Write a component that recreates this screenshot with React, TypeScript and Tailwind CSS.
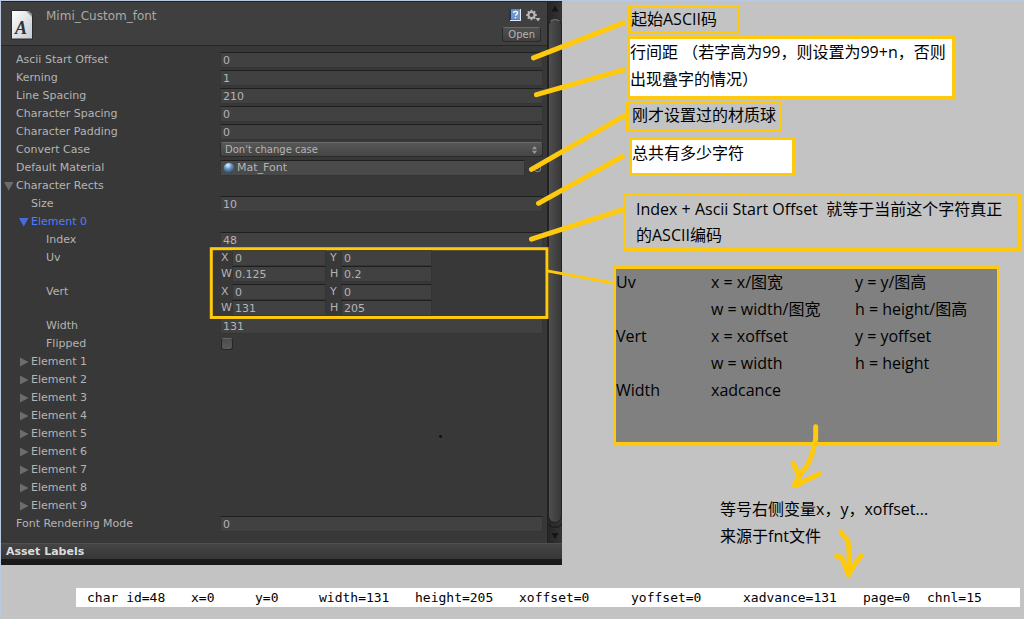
import React, { useState } from 'react';
import clsx from 'clsx';

const fieldStyle =
  'block h-4 w-full min-w-0 border border-[#353535] border-t-[#1f1f1f] bg-[#414141] px-0.5 text-[11px] leading-[14px] text-[#b4b4b4] outline-none';

type RowProps = {
  id?: string;
  label: string;
  indent?: 0 | 1 | 2;
  children?: React.ReactNode;
};

const Row = ({ id, label, indent = 0, children }: RowProps) => (
  <div className="flex min-h-[18px] items-start">
    <label
      htmlFor={id}
      className={clsx(
        'w-[219px] shrink-0 leading-[18px]',
        indent === 0 && 'pl-[15px]',
        indent === 1 && 'pl-[30px]',
        indent === 2 && 'pl-[45px]'
      )}
    >
      {label}
    </label>
    <div className="min-w-0 flex-1 pt-px pr-1">{children}</div>
  </div>
);

type NumberRowProps = { id: string; label: string; value: string; indent?: 0 | 1 | 2 };

const NumberRow = ({ id, label, value, indent = 0 }: NumberRowProps) => (
  <Row id={id} label={label} indent={indent}>
    <input id={id} type="text" defaultValue={value} className={fieldStyle} />
  </Row>
);

type FoldoutProps = { label: string; open?: boolean; active?: boolean; nested?: boolean };

const Foldout = ({ label, open = false, active = false, nested = false }: FoldoutProps) => (
  <button
    type="button"
    aria-expanded={open}
    className={clsx(
      'flex h-[18px] items-center gap-0.5 text-left',
      nested ? 'pl-[17px]' : 'pl-0.5',
      active ? 'text-[#4c7eff]' : 'text-[#b4b4b4]'
    )}
  >
    <svg viewBox="0 0 11 10" className={clsx('h-2.5 w-[11px]', active ? 'text-[#4a6be0]' : 'text-[#6c6c6c]')}>
      <path d={open ? 'M1 1h9.5L5.7 9.5z' : 'M2 0.5v9L10.5 5z'} fill="currentColor" />
    </svg>
    {label}
  </button>
);

const RectField = ({ name, values }: { name: string; values: [string, string, string, string] }) => (
  <fieldset className="flex pb-px">
    <legend className="float-left w-[219px] pl-[45px] leading-[18px]">{name}</legend>
    <div className="grid grid-cols-[106px_103px] gap-x-[3px] pt-px">
      {['X', 'Y', 'W', 'H'].map((axis, i) => (
        <label key={axis} className="flex h-4 items-center">
          <span className="w-3 shrink-0 pl-px leading-4">{axis}</span>
          <input type="text" defaultValue={values[i]} className={fieldStyle} />
        </label>
      ))}
    </div>
  </fieldset>
);

const FontIcon = () => (
  <svg viewBox="0 0 22 30" className="h-[30px] w-[22px]">
    <defs>
      <linearGradient id="paper" x1="0" y1="0" x2="1" y2="1">
        <stop offset="0" stopColor="#ffffff" />
        <stop offset="1" stopColor="#c3cbd2" />
      </linearGradient>
    </defs>
    <path d="M0.5 0.5h17l4 4v24.5h-21z" fill="url(#paper)" stroke="#2b2b2b" />
    <path d="M15 1l6 6V4l-3-3z" fill="#8d979f" />
    <text x="4" y="24" fontFamily="Liberation Serif, serif" fontStyle="italic" fontWeight="bold" fontSize="18" fill="#333">
      A
    </text>
  </svg>
);

const HelpIcon = () => (
  <svg viewBox="0 0 14 14" className="h-3.5 w-3.5">
    <path d="M1 1h12v12H1z" fill="#5a7fb5" />
    <path d="M1 1h2v12H1z" fill="#20365c" />
    <path d="M3 2h9v9H3z" fill="#6f96cc" />
    <path d="M2 12h11v1H2z" fill="#dfe8f4" />
    <path d="M12.5 1v12" stroke="#dfe8f4" />
    <path d="M5.5 5c0-2.2 4-2.2 4 0 0 1.4-2 1.4-2 2.8M7.5 9v1.3" stroke="#fff" strokeWidth="1.3" fill="none" />
  </svg>
);

const GearIcon = () => (
  <svg viewBox="0 0 15 13" className="h-[13px] w-[15px]">
    <g stroke="#b9b9b9" fill="none">
      <circle cx="5.5" cy="6" r="3" strokeWidth="2" />
      <path
        d="M5.5 0.8v2M5.5 9.2v2M0.3 6h2M8.7 6h2M1.8 2.3l1.5 1.5M7.7 8.2l1.5 1.5M9.2 2.3L7.7 3.8M3.3 8.2L1.8 9.7"
        strokeWidth="1.8"
      />
    </g>
    <path d="M9.5 9h5L12 12.5z" fill="#b9b9b9" />
  </svg>
);

const Header = () => (
  <header className="flex h-11 items-start justify-between border-b border-[#262626] bg-[#3f3f3f] pt-1.5 pr-1.5 pl-2.5">
    <div className="flex gap-[13px]">
      <div className="pt-0.5">
        <FontIcon />
      </div>
      <h1 className="text-[12px] leading-4 text-[#a9a9a9]">Mimi_Custom_font</h1>
    </div>
    <div className="flex flex-col items-end gap-[5px]">
      <div className="flex gap-1">
        <button type="button" aria-label="Help">
          <HelpIcon />
        </button>
        <button type="button" aria-label="Settings">
          <GearIcon />
        </button>
      </div>
      <button
        type="button"
        className="h-[15px] rounded-[3px] border border-[#2a2a2a] border-t-[#6a6a6a] bg-linear-to-b from-[#4f4f4f] to-[#404040] px-[5px] text-[10px] leading-[13px]"
      >
        Open
      </button>
    </div>
  </header>
);

const ScrollBar = () => (
  <div className="flex w-[15px] shrink-0 flex-col items-center border-l border-[#222] bg-linear-to-r from-[#262626] to-[#343434]">
    <svg viewBox="0 0 14 17" className="h-[17px] w-3.5 shrink-0">
      <path d="M3.5 9.5h7L7 3.5z" fill="#141414" />
    </svg>
    <div className="w-3.5 flex-1 rounded-full border border-[#222] border-t-[#777] bg-linear-to-r from-[#4f4f4f] to-[#383838]" />
    <svg viewBox="0 0 14 20" className="h-5 w-3.5 shrink-0">
      <path d="M0.5 0.5c1.5 5 11.5 5 13 0" fill="none" stroke="#1f1f1f" strokeWidth="1.5" />
      <path d="M3.5 10h7L7 16z" fill="#141414" />
    </svg>
  </div>
);

const Inspector = () => {
  const [convertCase, setConvertCase] = useState('none');

  return (
    <section className="flex flex-col border-t border-[#222] bg-[#383838] font-['DejaVu_Sans',Verdana,sans-serif] text-[11px] text-[#b4b4b4]">
      <div className="flex">
        <div className="min-w-0 flex-1">
          <Header />
          <div className="flex flex-col pt-[5px] pb-2.5">
            <NumberRow id="ascii" label="Ascii Start Offset" value="0" />
            <NumberRow id="kerning" label="Kerning" value="1" />
            <NumberRow id="line-spacing" label="Line Spacing" value="210" />
            <NumberRow id="char-spacing" label="Character Spacing" value="0" />
            <NumberRow id="char-padding" label="Character Padding" value="0" />
            <Row id="convert-case" label="Convert Case">
              <div className="relative">
                <select
                  id="convert-case"
                  value={convertCase}
                  onChange={(e) => setConvertCase(e.target.value)}
                  className="block h-[15px] w-full appearance-none rounded-[3px] border border-[#2a2a2a] border-t-[#6a6a6a] bg-linear-to-b from-[#575757] to-[#454545] px-1 text-[10px] leading-[13px] outline-none"
                >
                  <option value="none">Don't change case</option>
                  <option value="upper">To upper case</option>
                  <option value="lower">To lower case</option>
                </select>
                <svg viewBox="0 0 5 8" className="pointer-events-none absolute top-1 right-1.5 h-2 w-[5px]">
                  <path d="M0 3.2h5L2.5 0zM0 4.8h5L2.5 8z" fill="#9a9a9a" />
                </svg>
              </div>
            </Row>
            <Row id="material" label="Default Material">
              <div className="flex items-center justify-between">
                <button
                  id="material"
                  type="button"
                  className="flex h-4 flex-1 items-center gap-0.5 border border-[#353535] border-t-[#1f1f1f] bg-[#4a4a4a] px-0.5 text-left leading-[14px]"
                >
                  <svg viewBox="0 0 12 12" className="h-3 w-3">
                    <defs>
                      <radialGradient id="ball" cx="0.4" cy="0.25" r="0.8">
                        <stop offset="0" stopColor="#e8f3fb" />
                        <stop offset="0.45" stopColor="#5f92c0" />
                        <stop offset="1" stopColor="#21405e" />
                      </radialGradient>
                    </defs>
                    <circle cx="6" cy="6" r="5.3" fill="url(#ball)" />
                  </svg>
                  Mat_Font
                </button>
                <button type="button" aria-label="Select material" className="w-[18px] pl-2">
                  <svg viewBox="0 0 9 9" className="h-[9px] w-[9px]">
                    <circle cx="4.5" cy="4.5" r="3.2" fill="none" stroke="#909090" />
                    <circle cx="4.5" cy="4.5" r="1" fill="#909090" />
                  </svg>
                </button>
              </div>
            </Row>
            <Foldout label="Character Rects" open />
            <NumberRow id="size" label="Size" value="10" indent={1} />
            <Foldout label="Element 0" open active nested />
            <NumberRow id="index" label="Index" value="48" indent={2} />
            <RectField name="Uv" values={['0', '0', '0.125', '0.2']} />
            <RectField name="Vert" values={['0', '0', '131', '205']} />
            <NumberRow id="width" label="Width" value="131" indent={2} />
            <Row id="flipped" label="Flipped" indent={2}>
              <input
                id="flipped"
                type="checkbox"
                className="mt-0.5 ml-px block h-3 w-3 appearance-none rounded-[3px] border border-[#262626] border-t-[#666] bg-linear-to-b from-[#4b4b4b] to-[#5a5a5a]"
              />
            </Row>
            {[1, 2, 3, 4, 5, 6, 7, 8, 9].map((n) => (
              <Foldout key={n} label={`Element ${n}`} nested />
            ))}
            <NumberRow id="rendering" label="Font Rendering Mode" value="0" />
          </div>
        </div>
        <ScrollBar />
      </div>
      <h2 className="h-4 border-t border-[#505050] bg-linear-to-b from-[#454545] to-[#363636] pl-[5px] leading-4 font-bold text-[#dcdcdc]">
        Asset Labels
      </h2>
      <div className="h-1.5 bg-[#1a1a1a]" />
    </section>
  );
};

const formulas = [
  ['Uv', 'x = x/图宽', 'y = y/图高'],
  ['', 'w = width/图宽', 'h = height/图高'],
  ['Vert', 'x = xoffset', 'y = yoffset'],
  ['', 'w = width', 'h = height'],
  ['Width', 'xadcance', '']
];

const Notes = () => (
  <section className="flex flex-col items-start pt-1 pl-[51px] font-['Open_Sans','Noto_Sans_CJK_SC',sans-serif] text-[16px] leading-[27px] text-black">
    <p className="ml-[15px] h-[29px] w-28 border-3 border-[#ffc90e] leading-[23px]">起始ASCII码</p>
    <p className="mt-0.5 ml-3.5 w-[328px] border-3 border-[#ffc90e] bg-white pb-[3px]">
      行间距 （若字高为99，则设置为99+n，否则
      <br />
      出现叠字的情况）
    </p>
    <p className="mt-0.5 ml-[13px] h-[31px] w-39 border-3 border-[#ffc90e] pl-[3px] leading-[23px]">
      刚才设置过的材质球
    </p>
    <p className="mt-[5px] ml-4 w-[166px] border-3 border-[#ffc90e] bg-white pb-1.5">总共有多少字符</p>
    <p className="mt-[17px] ml-2.5 w-[398px] border-3 border-[#ffc90e] pl-2.5 leading-[26px] whitespace-pre">
      {'Index + Ascii Start Offset  就等于当前这个字符真正\n的ASCII编码'}
    </p>
    <div className="mt-[15px] w-[387px] border-3 border-[#ffc90e] bg-[#808080] pb-[38px]">
      <table className="w-full table-fixed text-left">
        <colgroup>
          <col className="w-[95px]" />
          <col className="w-36" />
          <col />
        </colgroup>
        <tbody>
          {formulas.map(([name, left, right], i) => (
            <tr key={i}>
              <th className="p-0 font-normal">{name}</th>
              <td className="p-0">{left}</td>
              <td className="p-0">{right}</td>
            </tr>
          ))}
        </tbody>
      </table>
    </div>
    <p className="mt-[51px] ml-[107px]">
      等号右侧变量x，y，xoffset...
      <br />
      来源于fnt文件
    </p>
  </section>
);

const CharLine = () => (
  <div className="mt-[23px] mr-1 ml-[75px] grid h-[19px] grid-cols-[104px_64px_64px_96px_104px_112px_112px_120px_64px_1fr] bg-white pl-[11px] font-['DejaVu_Sans_Mono',monospace] text-[13px] leading-[19px] whitespace-nowrap text-black">
    <span>char id=48</span>
    <span>x=0</span>
    <span>y=0</span>
    <span>width=131</span>
    <span>height=205</span>
    <span>xoffset=0</span>
    <span>yoffset=0</span>
    <span>xadvance=131</span>
    <span>page=0</span>
    <span>chnl=15</span>
  </div>
);

// Hand drawn marks that connect the fields with their notes
const Marks = () => (
  <svg
    viewBox="0 0 1024 619"
    preserveAspectRatio="none"
    className="pointer-events-none absolute inset-0 h-full w-full"
    fill="none"
    stroke="#ffc90e"
    strokeWidth="5"
    strokeLinecap="round"
    strokeLinejoin="round"
  >
    <path d="M533 57L623 22" />
    <path d="M536 94L623 69" />
    <path d="M531 169L626 114" />
    <path d="M538 203L622 156" />
    <path d="M531 239L623 209" />
    <path d="M548 271L613 283" strokeWidth="3" />
    <rect x="210.5" y="248.5" width="336" height="69" strokeWidth="3" strokeLinejoin="miter" />
    <path d="M815.5 427v12C813 452 809 467 802 472L794 485.500M793 463.500L799 477v7M819 474.500L803 482l-5 3.500h-4" />
    <path d="M841 533c1 4 6 4 7 10 1.500 8 1 22 1 32M836.500 557c6-1 7 6 11.500 18.500M861 556.500C855 564 851 570 848.500 576" />
    <circle cx="440" cy="437" r="1.500" fill="#111" stroke="none" />
  </svg>
);

const App = () => (
  <div className="min-h-screen bg-[#c3c3c3]">
    <main className="relative border-t border-l border-[#b9c9df] pb-[11px]">
      <div className="grid grid-cols-[561fr_462fr] items-start">
        <Inspector />
        <Notes />
      </div>
      <CharLine />
      <Marks />
    </main>
  </div>
);

export default App;
